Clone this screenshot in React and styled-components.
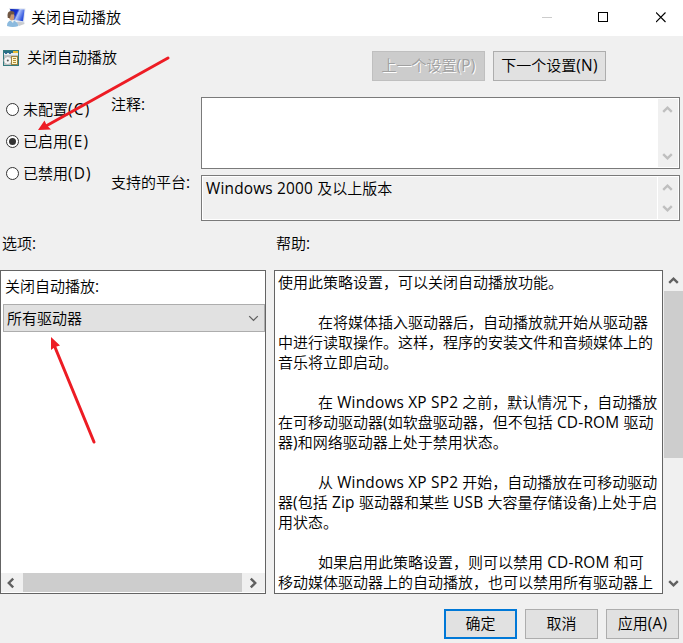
import styled, { createGlobalStyle, css } from 'styled-components';

const GlobalStyle = createGlobalStyle`
  * {
    box-sizing: border-box;
  }

  body {
    margin: 0;
    background: #f0f0f0;
  }
`;

const Window = styled.div`
  position: relative;
  display: flex;
  flex-direction: column;
  width: 683px;
  height: 643px;
  overflow: hidden;
  background: #f0f0f0;
  color: #000;
  font-family: 'Open Sans', 'Noto Sans CJK SC DemiLight', 'Noto Sans CJK SC', sans-serif;
  font-size: 15px;
  font-weight: 350;
  line-height: 20px;
  white-space: pre;
`;

const LatinText = styled.span`
  font-size: 15.4px;
  font-weight: 400;
  line-height: 0;
  letter-spacing: 0.2px;
`;

const TitleBar = styled.header`
  display: flex;
  align-items: center;
  height: 36px;
  padding-left: 6px;
  background: #fff;
`;

const Title = styled.h1`
  flex: 1;
  margin: 0 0 0 5px;
  padding-bottom: 2px;
  font-size: 15px;
  font-weight: inherit;
`;

const WindowControls = styled.div`
  display: flex;
  gap: 46px;
  padding: 0 16px 2px 0;

  svg {
    display: block;
  }
`;

const PolicyHeader = styled.div`
  display: flex;
  align-items: flex-start;
  height: 61px;
  padding: 11px 0 0 3px;
`;

const PolicyName = styled.div`
  width: 353px;
  padding-left: 8px;
`;

const PolicyIconBox = styled.div`
  display: flex;
  padding-top: 3px;
`;

const Button = styled.button`
  width: ${props => props.$width || 73}px;
  height: 30px;
  padding: 0 0 2px;
  border: 1px solid #adadad;
  background: #e1e1e1;
  color: #000;
  font: inherit;
  white-space: pre;

  ${props =>
    props.$primary &&
    css`
      border: 2px solid #0078d7;
    `}

  &:disabled {
    border-color: #bfbfbf;
    background: #ccc;
    color: #a0a0a0;
    text-shadow: 1px 1px 0 #fff;
  }
`;

const HeaderButtons = styled.div`
  display: flex;
  gap: 8px;
  padding-top: 4px;
`;

const StateSection = styled.section`
  display: grid;
  grid-template-columns: 111px 90px 479px;
  height: 124px;
`;

const RadioList = styled.div`
  display: flex;
  flex-direction: column;
  gap: 12px;
  padding: 2px 0 0 6px;
`;

const RadioLabel = styled.label`
  display: flex;
  align-items: center;
  gap: 4px;
  height: 20px;

  ${LatinText} {
    letter-spacing: 1.2px;
  }
`;

const RadioDot = styled.span`
  display: flex;
  align-items: center;
  justify-content: center;
  width: 13px;
  height: 13px;
  border: 1px solid #333;
  border-radius: 50%;
  background: #fff;

  &::after {
    content: '';
    width: 7px;
    height: 7px;
    border-radius: 50%;
    background: ${props => (props.$checked ? '#333' : 'transparent')};
  }
`;

const FieldLabels = styled.div`
  display: flex;
  flex-direction: column;
  gap: 58px;
  margin-top: -3px;
`;

const Fields = styled.div`
  display: flex;
  flex-direction: column;
  gap: 6px;
`;

const TextBox = styled.div`
  display: flex;
  height: ${props => props.$height}px;
  padding: 1px;
  border: 1px solid #7a7a7a;
  background: #fff;
`;

const TextBoxContent = styled.div`
  flex: 1;
  margin-right: 1px;
  padding: 1px 0 0 3px;
  background: ${props => (props.$readOnly ? '#f0f0f0' : '#fff')};
`;

const BoxScrollBar = styled.div`
  display: flex;
  flex-direction: column;
  align-items: center;
  justify-content: space-between;
  width: 20px;
  padding: 7px 1px 7px 0;
  background: #f0f0f0;
`;

const PanelLabels = styled.div`
  display: grid;
  grid-template-columns: 274px 1fr;
  height: 49px;
  padding: 12px 0 0 2px;
`;

const Panels = styled.section`
  display: flex;
  height: 324px;
`;

const OptionsPanel = styled.div`
  display: flex;
  flex-direction: column;
  width: 266px;
  margin-right: 8px;
  border: 1px solid #646464;
  background: #fff;
`;

const OptionLabel = styled.div`
  padding: 5px 0 8px 4px;
`;

const Select = styled.div`
  display: flex;
  align-items: center;
  justify-content: space-between;
  height: 28px;
  margin-left: 2px;
  padding: 0 6px 0 3px;
  border: 1px solid #adadad;
  background: #e1e1e1;
`;

const SelectValue = styled.span`
  padding-bottom: 1px;
`;

const HorizontalScroll = styled.div`
  display: flex;
  align-items: center;
  height: 20px;
  margin-top: auto;
  padding-left: 6px;
  border-bottom: 1px solid #fff;
  background: #f0f0f0;
`;

const HorizontalThumb = styled.div`
  width: 219px;
  height: 19px;
  margin: 0 8px 0 9px;
  background: #cdcdcd;
`;

const HelpPanel = styled.div`
  width: 389px;
  padding: 1px 0 0 3px;
  overflow: hidden;
  border: 1px solid #646464;
  background: #fff;
`;

const HelpLine = styled.div`
  height: 20px;
  padding-left: ${props => (props.$indent ? 40 : 0)}px;
`;

const VerticalScroll = styled.div`
  display: flex;
  flex-direction: column;
  align-items: center;
  width: 19px;
  margin-left: 1px;
  padding: 7px 0;
`;

const VerticalThumb = styled.div`
  width: 19px;
  height: 167px;
  margin: 7px 0 auto;
  background: #cdcdcd;
`;

const Footer = styled.footer`
  display: flex;
  justify-content: flex-end;
  gap: 8px;
  padding: 15px 4px 0 0;
`;

const ChevronIcon = styled.svg`
  display: block;
  flex: none;
  overflow: visible;
`;

const Annotations = styled.svg`
  position: absolute;
  top: 0;
  left: 0;
  pointer-events: none;
`;

const helpLines = [
  { text: '使用此策略设置，可以关闭自动播放功能。' },
  { text: '' },
  { text: '在将媒体插入驱动器后，自动播放就开始从驱动器', indent: true },
  { text: '中进行读取操作。这样，程序的安装文件和音频媒体上的' },
  { text: '音乐将立即启动。' },
  { text: '' },
  { text: '在 Windows XP SP2 之前，默认情况下，自动播放', indent: true },
  { text: '在可移动驱动器(如软盘驱动器，但不包括 CD-ROM 驱动' },
  { text: '器)和网络驱动器上处于禁用状态。' },
  { text: '' },
  { text: '从 Windows XP SP2 开始，自动播放在可移动驱动', indent: true },
  { text: '器(包括 Zip 驱动器和某些 USB 大容量存储设备)上处于启' },
  { text: '用状态。' },
  { text: '' },
  { text: '如果启用此策略设置，则可以禁用 CD-ROM 和可', indent: true },
  { text: '移动媒体驱动器上的自动播放，也可以禁用所有驱动器上' },
];

const states = [
  { label: '未配置(C)' },
  { label: '已启用(E)', checked: true },
  { label: '已禁用(D)' },
];

// Latin runs get their own size and tracking next to the Chinese text
const Mixed = ({ children }) =>
  children
    .split(/([\x20-\x7e]+)/)
    .map((part, i) => (i % 2 ? <LatinText key={i}>{part}</LatinText> : part));

const chevrons = {
  up: 'M0.2 5.9 L4.5 1.6 L8.8 5.9',
  down: 'M0.2 1.1 L4.5 5.4 L8.8 1.1',
  left: 'M6.2 0.6 L1.8 5 L6.2 9.4',
  right: 'M0.8 0.6 L5.2 5 L0.8 9.4',
};

const Chevron = ({ dir, color = '#606060', weight = 2.4 }) => {
  const upright = dir === 'up' || dir === 'down';
  return (
    <ChevronIcon width={upright ? 9 : 7} height={upright ? 7 : 10}>
      <path d={chevrons[dir]} fill="none" stroke={color} strokeWidth={weight} />
    </ChevronIcon>
  );
};

const UserIcon = () => (
  <svg width="20" height="20" viewBox="0 0 20 20">
    <defs>
      <linearGradient id="screen" x1="0" y1="0" x2="1" y2="0.4">
        <stop offset="0" stopColor="#0a1fae" />
        <stop offset="0.5" stopColor="#1230d0" />
        <stop offset="0.62" stopColor="#a9c0fa" />
        <stop offset="1" stopColor="#2c50dc" />
      </linearGradient>
    </defs>
    <path d="M10 14 L18 13 L18.5 16 L13 18 Z" fill="#c9ccd0" />
    <path d="M3 0 L19.5 0.5 L18 14.5 L6 12.5 Z" fill="#dde3ee" />
    <path d="M4 1 L18.5 1.5 L17 13.2 L7 11.5 Z" fill="url(#screen)" />
    <path d="M1 18 Q1 12.5 5.5 12.5 Q11 12 12.5 18 Q7 20 1 18 Z" fill="#8cbade" />
    <path d="M4 12 L8 12 L7 15 Z" fill="#f4f4f0" />
    <ellipse cx="5.7" cy="8.6" rx="2.8" ry="3.8" fill="#c99a72" />
    <path d="M1.8 10 Q0.5 3 5 3 Q9 3 8.5 6.2 L5 6.6 L4 10 Z" fill="#705643" />
  </svg>
);

const PolicyIcon = () => (
  <svg width="16" height="16" shapeRendering="crispEdges">
    <rect width="16" height="16" fill="#347c80" />
    <rect x="1" y="1" width="9" height="2" fill="#2a6f86" />
    <rect x="10" y="1" width="5" height="2" fill="#e8bd32" />
    <rect x="1" y="3" width="14" height="2" fill="#e8eeee" />
    <rect x="2" y="3" width="2" height="1" fill="#3969a0" />
    <rect x="6" y="3" width="2" height="1" fill="#3969a0" />
    <rect x="1" y="5" width="14" height="10" fill="#c0c6c6" />
    <circle cx="4.8" cy="10.5" r="4" fill="#f5f5f5" stroke="#9a9a9a" strokeWidth="0.6" shapeRendering="auto" />
    <circle cx="4.8" cy="10.5" r="1" fill="#555" shapeRendering="auto" />
    <rect x="8" y="6" width="7" height="9" fill="#9c8240" />
    <rect x="9" y="7" width="5" height="7" fill="#fff7c9" />
    <path d="M10 8.5h3M10 10.5h3M10 12.5h3" stroke="#b18b37" />
  </svg>
);

const App = () => (
  <>
    <GlobalStyle />
    <Window>
      <TitleBar>
        <UserIcon />
        <Title>关闭自动播放</Title>
        <WindowControls>
          <svg width="10" height="11" shapeRendering="crispEdges">
            <path d="M0 5.5h10" stroke="#ccc" />
          </svg>
          <svg width="12" height="11" shapeRendering="crispEdges">
            <rect x="0.5" y="0.5" width="9" height="9" fill="none" stroke="#000" />
          </svg>
          <svg width="11" height="11">
            <path d="M0 0.5 L9.5 10 M9.5 0.5 L0 10" stroke="#000" strokeWidth="1.1" />
          </svg>
        </WindowControls>
      </TitleBar>

      <PolicyHeader>
        <PolicyIconBox>
          <PolicyIcon />
        </PolicyIconBox>
        <PolicyName>关闭自动播放</PolicyName>
        <HeaderButtons>
          <Button $width={113} disabled>
            <Mixed>上一个设置(P)</Mixed>
          </Button>
          <Button $width={113}>
            <Mixed>下一个设置(N)</Mixed>
          </Button>
        </HeaderButtons>
      </PolicyHeader>

      <StateSection>
        <RadioList>
          {states.map(({ label, checked }) => (
            <RadioLabel key={label}>
              <RadioDot $checked={checked} />
              <span>
                <Mixed>{label}</Mixed>
              </span>
            </RadioLabel>
          ))}
        </RadioList>
        <FieldLabels>
          <span>
            <Mixed>注释:</Mixed>
          </span>
          <span>
            <Mixed>支持的平台:</Mixed>
          </span>
        </FieldLabels>
        <Fields>
          <TextBox $height={72}>
            <TextBoxContent />
            <BoxScrollBar>
              <Chevron dir="up" color="#bfbfbf" />
              <Chevron dir="down" color="#bfbfbf" />
            </BoxScrollBar>
          </TextBox>
          <TextBox $height={46}>
            <TextBoxContent $readOnly>
              <Mixed>Windows 2000 及以上版本</Mixed>
            </TextBoxContent>
            <BoxScrollBar>
              <Chevron dir="up" color="#bfbfbf" />
              <Chevron dir="down" color="#bfbfbf" />
            </BoxScrollBar>
          </TextBox>
        </Fields>
      </StateSection>

      <PanelLabels>
        <span>
          <Mixed>选项:</Mixed>
        </span>
        <span>
          <Mixed>帮助:</Mixed>
        </span>
      </PanelLabels>

      <Panels>
        <OptionsPanel>
          <OptionLabel>
            <Mixed>关闭自动播放:</Mixed>
          </OptionLabel>
          <Select>
            <SelectValue>所有驱动器</SelectValue>
            <Chevron dir="down" weight={1.3} />
          </Select>
          <HorizontalScroll>
            <Chevron dir="left" />
            <HorizontalThumb />
            <Chevron dir="right" />
          </HorizontalScroll>
        </OptionsPanel>
        <HelpPanel>
          {helpLines.map(({ text, indent }, i) => (
            <HelpLine key={i} $indent={indent}>
              <Mixed>{text}</Mixed>
            </HelpLine>
          ))}
        </HelpPanel>
        <VerticalScroll>
          <Chevron dir="up" />
          <VerticalThumb />
          <Chevron dir="down" />
        </VerticalScroll>
      </Panels>

      <Footer>
        <Button $primary>确定</Button>
        <Button>取消</Button>
        <Button>
          <Mixed>应用(A)</Mixed>
        </Button>
      </Footer>

      <Annotations width="683" height="643" fill="#ed1c24" stroke="#ed1c24">
        <path d="M168 58 L46 126" strokeWidth="3" strokeLinecap="round" />
        <path d="M38 130 L44.5 120.5 L46.5 125 L51 129.5 Z" stroke="none" />
        <path d="M94 442 L54.5 346" strokeWidth="3" strokeLinecap="round" />
        <path d="M51 337 L60 345.5 L55 347 L51 350 Z" stroke="none" />
      </Annotations>
    </Window>
  </>
);

export default App;
